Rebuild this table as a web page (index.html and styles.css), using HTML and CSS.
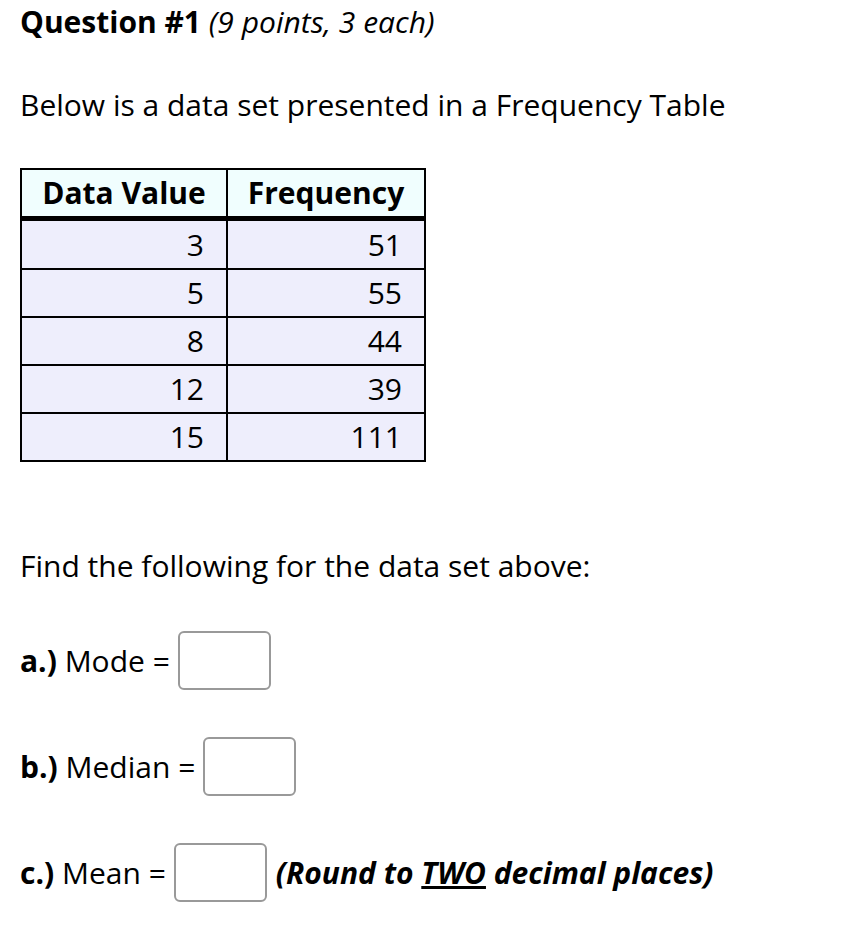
FILE: index.html
```html
<!DOCTYPE html>
<html>
<head>
<meta charset="utf-8">
<link rel="stylesheet" href="styles.css">
</head>
<body>
<div class="page">
  <h1 class="title"><b>Question #1</b> <i>(9 points, 3 each)</i></h1>
  <p class="intro">Below is a data set presented in a Frequency Table</p>
  <table class="freq">
    <colgroup><col class="c1"><col class="c2"></colgroup>
    <thead>
      <tr><th>Data Value</th><th>Frequency</th></tr>
    </thead>
    <tbody>
      <tr><td>3</td><td>51</td></tr>
      <tr><td>5</td><td>55</td></tr>
      <tr><td>8</td><td>44</td></tr>
      <tr><td>12</td><td>39</td></tr>
      <tr><td>15</td><td>111</td></tr>
    </tbody>
  </table>
  <p class="find">Find the following for the data set above:</p>
  <div class="q q-a"><span class="lbl"><b>a.)</b> Mode =</span><span class="box"></span></div>
  <div class="q q-b"><span class="lbl"><b>b.)</b> Median =</span><span class="box"></span></div>
  <div class="q q-c"><span class="lbl"><b>c.)</b> Mean =</span><span class="box"></span><b class="note"><i>(Round to <u>TWO</u> decimal places)</i></b></div>
</div>
</body>
</html>
```
FILE: styles.css
```css
html, body { margin: 0; padding: 0; background: #fff; }
body { font-family: "Open Sans", "Liberation Sans", sans-serif; color: #000; font-size: 30px; }
.page { padding: 2px 20px 0; }
.title { margin: 0; font-size: 30px; font-weight: normal; line-height: 40px; }
.title b { font-weight: 700; }
.title i { font-style: italic; }
.intro { margin: 43px 0 0; line-height: 40px; }
.freq { margin-top: 43px; border-collapse: separate; border-spacing: 0; border-top: 2px solid #000; border-left: 2px solid #000; table-layout: fixed; width: 406px; font-size: 30px; line-height: 40px; }
.c1 { width: 206px; }
.c2 { width: 198px; }
.freq th, .freq td { border-right: 2px solid #000; border-bottom: 2px solid #000; padding: 0; }
.freq th { background: #f0fefe; font-weight: 700; height: 46px; border-bottom: 5px solid #000; text-align: center; }
.freq td { background: #eeeefc; height: 46px; padding-right: 22px; text-align: right; }
.freq tbody tr:first-child td { height: 47px; }
.find { margin: 84px 0 0; line-height: 40px; }
.q { display: flex; align-items: center; line-height: 40px; }
.q-a { margin-top: 45px; }
.q-b { margin-top: 47px; }
.q-c { margin-top: 47px; }
.lbl { margin-right: 8px; }
.box { display: block; width: 89px; height: 55px; border: 2px solid #999; border-radius: 6px; }
.note { margin-left: 9px; }
```
